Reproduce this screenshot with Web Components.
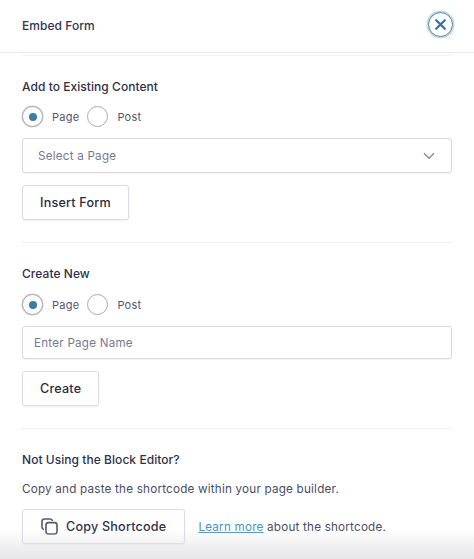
<!doctype html>
<html><head><meta charset="utf-8">
<style>
html,body{margin:0;padding:0;background:#fff}
body{width:474px;height:559px;overflow:hidden;font-family:Inter,"Liberation Sans",sans-serif;color:#2f3147}
</style></head><body>
<embed-dialog>
  <span slot="title">Embed Form</span>
  <form-section heading="Add to Existing Content" style="--top:23px;--bottom:22px;--gap:12px">
    <radio-row></radio-row>
    <text-field placeholder="Select a Page" pad="15" chevron></text-field>
    <action-button>Insert Form</action-button>
  </form-section>
  <form-section heading="Create New" divider style="--top:23px;--bottom:22px;--gap:13px">
    <radio-row></radio-row>
    <text-field placeholder="Enter Page Name" pad="11" h="33"></text-field>
    <action-button>Create</action-button>
  </form-section>
  <shortcode-section></shortcode-section>
</embed-dialog>
<script>
function def(name,css,html){
  customElements.define(name,class extends HTMLElement{
    connectedCallback(){
      if(this.shadowRoot)return;
      const r=this.attachShadow({mode:'open'});
      r.innerHTML='<style>'+css+'</style>'+(typeof html==='function'?html(this):html);
    }
  });
}
def('embed-dialog',`
:host{display:block;position:relative;width:474px;height:559px;overflow:hidden;background:#fff}
header{height:53px;box-sizing:border-box;border-bottom:1px solid #eaeaf0;display:flex;align-items:center;justify-content:space-between;padding:0 22px 1px;font-size:12px;font-weight:500;letter-spacing:.05px;color:#33364f;}
.rule{height:1px;background:#f3f3f6;margin:2px 22px 0}
button{all:unset;width:25px;height:25px;box-sizing:border-box;border-radius:50%;border:1.5px solid #4d7f9f;box-shadow:0 0 0 1.5px #c3d9e8;display:flex;align-items:center;justify-content:center;margin:-2px -1px 0 0}
.fade{position:absolute;left:0;right:0;bottom:0;height:30px;background:linear-gradient(rgba(225,225,228,0),rgba(225,225,228,.85));pointer-events:none}
`,`<header><slot name="title"></slot><button aria-label="Close"><svg width="13" height="13" viewBox="0 0 13 13"><path d="M2.2 2.2 10.8 10.8M10.8 2.2 2.2 10.8" stroke="#3a7297" stroke-width="2.2" stroke-linecap="round" fill="none"/></svg></button></header><div class="rule"></div><slot></slot><div class="fade"></div>`);

def('form-section',`
:host{display:block;margin:0 22px;padding:var(--top) 0 var(--bottom)}
:host([divider]){border-top:1px solid #f0f0f4}
h2{margin:0 0 var(--gap);font-size:12px;line-height:16px;font-weight:500;color:#2f3147;letter-spacing:.05px}
.body{display:flex;flex-direction:column;align-items:flex-start;gap:12px}
`,t=>`<h2>${t.getAttribute('heading')}</h2><div class="body"><slot></slot></div>`);

def('radio-row',`
:host{display:flex;align-items:center;height:19px;font-size:11px;color:#53566c;letter-spacing:.25px}
i{width:21px;height:21px;box-sizing:border-box;border-radius:50%;border:1px solid #a9a9b8;background:#fff;display:flex;align-items:center;justify-content:center;margin-right:9px}
i.on{box-shadow:0 0 0 .5px #d8c8c8}
i.on::after{content:"";width:8px;height:8px;border-radius:50%;background:#3b7ba5}
span{margin-right:8px}
`,`<i class="on"></i><span>Page</span><i></i><span>Post</span>`);

def('text-field',`
:host{display:flex;align-items:center;justify-content:space-between;align-self:stretch;box-sizing:border-box;border:1px solid #d9d9e6;border-radius:3px;background:#fff;font-size:11.6px;color:#767a8e;letter-spacing:.25px;box-shadow:0 1px 1px rgba(40,40,80,.05)}
svg{display:block}
`,t=>{
  t.style.height=(t.getAttribute('h')||'35')+'px';
  t.style.padding='0 16px 0 '+t.getAttribute('pad')+'px';
  return `<span>${t.getAttribute('placeholder')}</span>`+(t.hasAttribute('chevron')?`<svg width="12" height="8" viewBox="0 0 12 8"><path d="M1 1.2 6 6.2 11 1.2" stroke="#8b8d9e" stroke-width="1.5" fill="none"/></svg>`:'');
});

def('action-button',`
:host{display:inline-flex;align-items:center;height:35px;box-sizing:border-box;padding:0 17px;border:1px solid #dcdce6;border-radius:3px;background:#fff;font-size:12.6px;font-weight:500;color:#2b2d40;letter-spacing:.2px;box-shadow:0 1px 2px rgba(40,40,80,.08);white-space:nowrap}
`,`<slot></slot>`);

def('shortcode-section',`
:host{display:block;margin:0 22px;padding:23px 0 0;border-top:1px solid #f0f0f4;position:relative}
h2{margin:0 0 13px;font-size:12px;line-height:16px;font-weight:500;color:#2f3147;letter-spacing:.05px}
p{margin:0 0 12px;font-size:11.7px;line-height:16px;color:#4a4d63;letter-spacing:.2px}
.row{display:flex;align-items:center;gap:13px;font-size:11.7px;color:#4a4d63;letter-spacing:.2px}
a{color:#4d93bb;text-decoration:underline}
.copy{display:flex;align-items:center;gap:8px;height:35px;box-sizing:border-box;padding:0 18px;border:1px solid #dcdce6;border-radius:3px;background:#fff;font-size:12.6px;font-weight:500;color:#2f3147;letter-spacing:.2px;box-shadow:0 1px 2px rgba(40,40,80,.08)}
svg{display:block}
`,`<h2>Not Using the Block Editor?</h2><p>Copy and paste the shortcode within your page builder.</p><div class="row"><div class="copy"><svg width="17" height="17" viewBox="0 0 17 17" fill="none" stroke="#55586e" stroke-width="1.6"><path d="M3 11.5C1.6 11.2 1 10.4 1 9.2V3.6C1 2 2 1 3.6 1h5.6c1.2 0 2 .6 2.3 2"/><rect x="5" y="4.6" width="11" height="11.4" rx="2.4"/></svg><span>Copy Shortcode</span></div><span><a>Learn more</a> about the shortcode.</span></div>`);
</script>
</body></html>
